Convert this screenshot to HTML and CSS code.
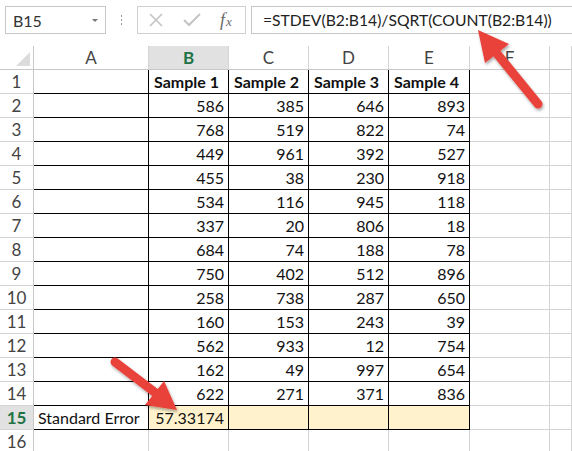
FILE: index.html
```html
<!DOCTYPE html>
<html>
<head>
<meta charset="utf-8">
<link rel="stylesheet" href="styles.css">
</head>
<body>
<div class="toolbar">
  <div class="namebox"><span class="nb-text">B15</span><span class="caret"></span></div>
  <div class="grip"><i></i><i></i><i></i></div>
  <div class="fnbox">
    <svg class="ico-x" width="14" height="14" viewBox="0 0 14 14"><path d="M1 1 L13 13 M13 1 L1 13" stroke="#c4c4c4" stroke-width="1.6" fill="none"/></svg>
    <svg class="ico-ok" width="18" height="14" viewBox="0 0 18 14"><path d="M1 7 L6 12 L17 1" stroke="#c4c4c4" stroke-width="2" fill="none"/></svg>
    <span class="fx"><span class="fx-f">f</span><span class="fx-x">x</span></span>
  </div>
  <div class="formula">=STDEV(B2:B14)/SQRT(COUNT(B2:B14))</div>
</div>
<div class="sheet" id="sheet">
  <div class="c corner"><span class="tri"></span></div>
  <div class="c ch">A</div>
  <div class="c ch sel">B</div>
  <div class="c ch">C</div>
  <div class="c ch">D</div>
  <div class="c ch">E</div>
  <div class="c ch">F</div>
  <div class="c ch"></div>

  <div class="c rh">1</div>
  <div class="c b"></div>
  <div class="c b bold">Sample 1</div>
  <div class="c b bold">Sample 2</div>
  <div class="c b bold">Sample 3</div>
  <div class="c b bold">Sample 4</div>
  <div class="c"></div><div class="c"></div>

  <div class="c rh">2</div><div class="c b"></div><div class="c b num">586</div><div class="c b num">385</div><div class="c b num">646</div><div class="c b num">893</div><div class="c"></div><div class="c"></div>
  <div class="c rh">3</div><div class="c b"></div><div class="c b num">768</div><div class="c b num">519</div><div class="c b num">822</div><div class="c b num">74</div><div class="c"></div><div class="c"></div>
  <div class="c rh">4</div><div class="c b"></div><div class="c b num">449</div><div class="c b num">961</div><div class="c b num">392</div><div class="c b num">527</div><div class="c"></div><div class="c"></div>
  <div class="c rh">5</div><div class="c b"></div><div class="c b num">455</div><div class="c b num">38</div><div class="c b num">230</div><div class="c b num">918</div><div class="c"></div><div class="c"></div>
  <div class="c rh">6</div><div class="c b"></div><div class="c b num">534</div><div class="c b num">116</div><div class="c b num">945</div><div class="c b num">118</div><div class="c"></div><div class="c"></div>
  <div class="c rh">7</div><div class="c b"></div><div class="c b num">337</div><div class="c b num">20</div><div class="c b num">806</div><div class="c b num">18</div><div class="c"></div><div class="c"></div>
  <div class="c rh">8</div><div class="c b"></div><div class="c b num">684</div><div class="c b num">74</div><div class="c b num">188</div><div class="c b num">78</div><div class="c"></div><div class="c"></div>
  <div class="c rh">9</div><div class="c b"></div><div class="c b num">750</div><div class="c b num">402</div><div class="c b num">512</div><div class="c b num">896</div><div class="c"></div><div class="c"></div>
  <div class="c rh">10</div><div class="c b"></div><div class="c b num">258</div><div class="c b num">738</div><div class="c b num">287</div><div class="c b num">650</div><div class="c"></div><div class="c"></div>
  <div class="c rh">11</div><div class="c b"></div><div class="c b num">160</div><div class="c b num">153</div><div class="c b num">243</div><div class="c b num">39</div><div class="c"></div><div class="c"></div>
  <div class="c rh">12</div><div class="c b"></div><div class="c b num">562</div><div class="c b num">933</div><div class="c b num">12</div><div class="c b num">754</div><div class="c"></div><div class="c"></div>
  <div class="c rh">13</div><div class="c b"></div><div class="c b num">162</div><div class="c b num">49</div><div class="c b num">997</div><div class="c b num">654</div><div class="c"></div><div class="c"></div>
  <div class="c rh">14</div><div class="c b"></div><div class="c b num">622</div><div class="c b num">271</div><div class="c b num">371</div><div class="c b num">836</div><div class="c"></div><div class="c"></div>

  <div class="c rh rsel">15</div>
  <div class="c b">Standard Error</div>
  <div class="c b num hl">57.33174</div>
  <div class="c b hl"></div>
  <div class="c b hl"></div>
  <div class="c b hl"></div>
  <div class="c"></div><div class="c"></div>

  <div class="c rh">16</div><div class="c"></div><div class="c"></div><div class="c"></div><div class="c"></div><div class="c"></div><div class="c"></div><div class="c"></div>
</div>
<svg class="arrows" width="572" height="451" viewBox="0 0 572 451">
  <defs>
    <filter id="sh" x="-20%" y="-20%" width="140%" height="140%">
      <feDropShadow dx="1" dy="2" stdDeviation="1.5" flood-color="#000" flood-opacity="0.35"/>
    </filter>
  </defs>
  <g filter="url(#sh)" fill="#e8423a" stroke="#e8423a">
    <line x1="538" y1="104" x2="494" y2="50" stroke-width="9" stroke-linecap="round"/>
    <polygon points="478,30 509,44 485,63" stroke="none"/>
    <line x1="115" y1="362" x2="157" y2="394" stroke-width="9" stroke-linecap="round"/>
    <polygon points="177,410 145,405 164,381" stroke="none"/>
  </g>
</svg>
</body>
</html>
```
FILE: styles.css
```css
html, body {
  margin: 0;
  padding: 0;
  background: #ffffff;
}
body {
  width: 572px;
  height: 451px;
  overflow: hidden;
  position: relative;
  font-family: "Lato", "Liberation Sans", sans-serif;
  color: #111;
}
.toolbar {
  display: flex;
  align-items: center;
  height: 40px;
  margin-bottom: 6px;
  box-sizing: border-box;
}
.namebox {
  margin-left: 5px;
  width: 101px;
  height: 28px;
  box-sizing: border-box;
  border: 1px solid #c6c6c6;
  display: flex;
  align-items: center;
  justify-content: space-between;
  padding: 0 7px 0 7px;
  font-size: 16px;
  color: #333;
}
.caret {
  width: 0;
  height: 0;
  border-left: 3px solid transparent;
  border-right: 3px solid transparent;
  border-top: 3px solid #777;
}
.grip {
  width: 31px;
  display: flex;
  flex-direction: column;
  align-items: center;
  gap: 2px;
}
.grip i {
  display: block;
  width: 1px;
  height: 2px;
  background: #999;
}
.fnbox {
  width: 109px;
  height: 28px;
  box-sizing: border-box;
  border: 1px solid #d0d0d0;
  display: flex;
  align-items: center;
  padding-left: 11px;
}
.ico-x { margin-right: 20px; }
.ico-ok { margin-right: 19px; }
.fx {
  font-family: "Liberation Serif", serif;
  font-style: italic;
  color: #6a6a6a;
  font-size: 18px;
  line-height: 1;
}
.fx-x {
  font-size: 13px;
  margin-left: 1px;
}
.formula {
  margin-left: 5px;
  flex: 1;
  height: 28px;
  box-sizing: border-box;
  border: 1px solid #c6c6c6;
  border-right: none;
  display: flex;
  align-items: center;
  padding-left: 11px;
  font-size: 15.7px;
  color: #222;
  white-space: nowrap;
}
.sheet {
  display: grid;
  grid-template-columns: 34px 115px 80px 80px 80px 81px 80px 1fr;
  grid-auto-rows: 24px;
  font-size: 16px;
}
.c {
  box-sizing: border-box;
  border-right: 1px solid #d4d4d4;
  border-bottom: 1px solid #d4d4d4;
  display: flex;
  align-items: flex-end;
  padding: 0 4px 2px 4px;
  white-space: nowrap;
  overflow: hidden;
  line-height: 19px;
}
.b {
  border-right-color: #000;
  border-bottom-color: #000;
}
.num { justify-content: flex-end; }
.bold { font-weight: 700; padding-left: 5px; }
.hl { background: #fff2cc; }
.ch {
  justify-content: center;
  align-items: center;
  color: #444;
  padding: 0;
  font-size: 17px;
  border-bottom-color: #c8c8c8;
}
.ch.sel {
  background: #e1e1e1;
  color: #217346;
  font-weight: 700;
}
.rh {
  justify-content: center;
  align-items: center;
  color: #444;
  padding: 0;
  font-size: 17px;
  border-right-color: #c8c8c8;
}
.rh.rsel {
  background: #e1e1e1;
  color: #217346;
  font-weight: 700;
}
.corner {
  position: relative;
  padding: 0;
  border-right-color: #c8c8c8;
  border-bottom-color: #c8c8c8;
}
.tri {
  position: absolute;
  right: 3px;
  bottom: 3px;
  width: 0;
  height: 0;
  border-left: 14px solid transparent;
  border-bottom: 14px solid #dcdcdc;
}
.arrows {
  position: absolute;
  left: 0;
  top: 0;
  pointer-events: none;
}
```
